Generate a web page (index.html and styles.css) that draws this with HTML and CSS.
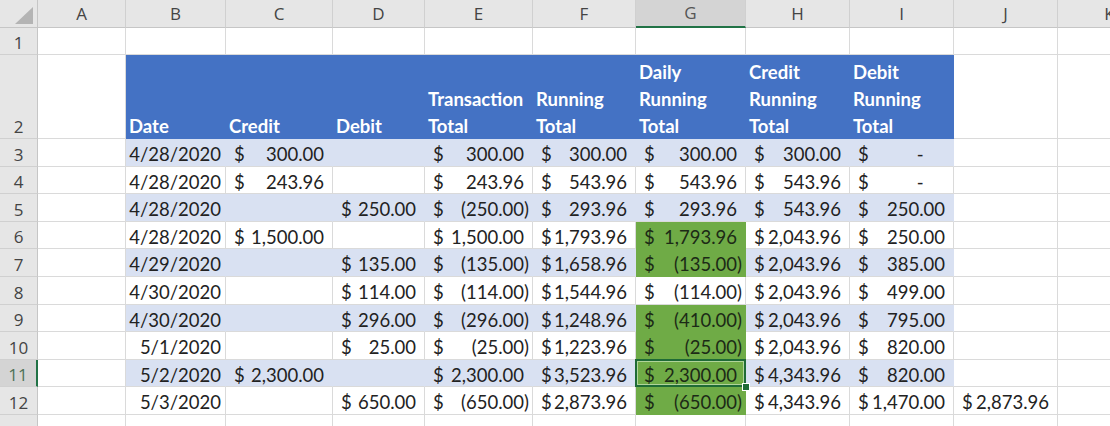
FILE: index.html
```html
<!DOCTYPE html>
<html>
<head>
    <title>Running Totals</title>
    <link rel="stylesheet" href="styles.css">
</head>
<body>
    <div class="sheet" id="sheet"></div>
    <script>
        // column letters and the selected cell
        const cols = ['A', 'B', 'C', 'D', 'E', 'F', 'G', 'H', 'I', 'J', 'K'];
        const selCol = 'G';
        const selRow = 11;

        // header text of row 2 (B..I)
        const heads = [
            ['Date'], ['Credit'], ['Debit'], ['Transaction', 'Total'], ['Running', 'Total'],
            ['Daily', 'Running', 'Total'], ['Credit', 'Running', 'Total'], ['Debit', 'Running', 'Total']
        ];

        // data rows 3..12: date, credit, debit, trans, running, daily, credit run, debit run
        const rows = [
            ['4/28/2020', '300.00', '', '300.00', '300.00', '300.00', '300.00', '0'],
            ['4/28/2020', '243.96', '', '243.96', '543.96', '543.96', '543.96', '0'],
            ['4/28/2020', '', '250.00', '-250.00', '293.96', '293.96', '543.96', '250.00'],
            ['4/28/2020', '1,500.00', '', '1,500.00', '1,793.96', '1,793.96', '2,043.96', '250.00'],
            ['4/29/2020', '', '135.00', '-135.00', '1,658.96', '-135.00', '2,043.96', '385.00'],
            ['4/30/2020', '', '114.00', '-114.00', '1,544.96', '-114.00', '2,043.96', '499.00'],
            ['4/30/2020', '', '296.00', '-296.00', '1,248.96', '-410.00', '2,043.96', '795.00'],
            ['5/1/2020', '', '25.00', '-25.00', '1,223.96', '-25.00', '2,043.96', '820.00'],
            ['5/2/2020', '2,300.00', '', '2,300.00', '3,523.96', '2,300.00', '4,343.96', '820.00'],
            ['5/3/2020', '', '650.00', '-650.00', '2,873.96', '-650.00', '4,343.96', '1,470.00']
        ];

        // rows where the daily running total is highlighted
        const greenRows = [6, 7, 9, 10, 11, 12];

        // accounting format: _($* #,##0.00_)
        function money(v) {
            if (v === '0') {
                return '<span class="pad">(</span>$<span class="fill"></span>-<span class="pad">00)</span>';
            }
            let txt = v.startsWith('-') ? '(' + v.slice(1) + ')' : v + '<span class="pad">)</span>';
            return '<span class="pad">(</span>$<span class="fill"></span>' + txt;
        }

        function makeCell(cls, html) {
            const d = document.createElement('div');
            d.className = cls;
            d.innerHTML = html || '';
            return d;
        }

        const sheet = document.getElementById('sheet');

        // column header row
        sheet.appendChild(makeCell('corner', '<span class="tri"></span>'));
        for (const c of cols) {
            sheet.appendChild(makeCell('colhead' + (c === selCol ? ' sel' : ''), c));
        }

        for (let r = 1; r <= 13; r++) {
            sheet.appendChild(makeCell('rowhead' + (r === selRow ? ' sel' : ''), r));
            cols.forEach((c, i) => {
                let cls = 'cell';
                let html = '';
                const inTable = i >= 1 && i <= 8;

                if (r === 2 && inTable) {
                    cls += ' head';
                    html = '<span>' + heads[i - 1].join('<br>') + '</span>';
                } else if (r >= 3 && r <= 12 && inTable) {
                    const v = rows[r - 3][i - 1];
                    if (r % 2 === 1) cls += ' band';
                    if (c === 'G' && greenRows.includes(r)) cls += ' green';
                    if (c === selCol && r === selRow) cls += ' active';
                    if (i === 1) {
                        cls += ' date';
                        html = v;
                    } else if (v !== '') {
                        cls += ' num';
                        html = money(v);
                    }
                } else if (r === 12 && c === 'J') {
                    cls += ' num';
                    html = money('2,873.96');
                }
                sheet.appendChild(makeCell(cls, html));
            });
        }
    </script>
</body>
</html>
```

FILE: styles.css
```css
body {
    margin: 0;
    overflow: hidden;
    background: #fff;
}
.sheet {
    display: grid;
    grid-template-columns: 38px 88px 100px 107px 92px 108px 103px 110px 104px 104px 104px 104px;
    grid-template-rows: 28px 27px 84px repeat(10, 27.6px) 40px;
    font-family: Lato, "Open Sans", sans-serif;
    font-size: 18.5px;
    color: #222;
}
.corner, .colhead, .rowhead {
    background: #e6e6e6;
    font-family: "Open Sans", sans-serif;
    font-size: 17px;
    color: #444;
    box-sizing: border-box;
}
.corner {
    position: relative;
    border-right: 1px solid #c6c6c6;
    border-bottom: 1px solid #c6c6c6;
}
.tri {
    position: absolute;
    right: 4px;
    bottom: 3px;
    width: 0;
    height: 0;
    border-left: 18px solid transparent;
    border-bottom: 17px solid #b4b4b4;
}
.colhead {
    display: flex;
    align-items: center;
    justify-content: center;
    border-right: 1px solid #d0d0d0;
    border-bottom: 1px solid #c6c6c6;
    padding-bottom: 1px;
}
.colhead.sel {
    background: #d4d4d4;
    color: #555;
    border-bottom: 2px solid #217346;
}
.rowhead {
    display: flex;
    align-items: flex-end;
    justify-content: center;
    line-height: 23px;
    border-right: 1px solid #c6c6c6;
    border-bottom: 1px solid #d0d0d0;
}
.rowhead.sel {
    background: #d4d4d4;
    color: #4f7157;
    border-right: 2px solid #217346;
}
.cell {
    box-sizing: border-box;
    border-right: 1px solid #dadada;
    border-bottom: 1px solid #dadada;
    line-height: 26.6px;
    padding-top: 2px;
    white-space: nowrap;
    overflow: hidden;
}
.cell.head {
    background: #4472c4;
    border-color: #4472c4;
    color: #fff;
    font-weight: bold;
    display: flex;
    align-items: flex-end;
    padding: 0 0 0 3px;
    line-height: 27px;
}
.cell.head span {
    margin-bottom: -2px;
}
.cell.band {
    background: #d9e1f2;
    border-right-color: #d9e1f2;
}
.cell.green {
    background: #6fab46;
    border-color: #6fab46;
    color: #1c2a16;
}
.cell.active {
    position: relative;
    overflow: visible;
    z-index: 2;
}
.cell.active::before {
    content: "";
    position: absolute;
    left: -1px;
    top: -1px;
    right: -1px;
    bottom: -1px;
    border: 2px solid #1f6b36;
    box-shadow: inset 0 0 0 1px rgba(220, 240, 210, 0.6);
}
.cell.active::after {
    content: "";
    position: absolute;
    right: -5px;
    bottom: -5px;
    width: 6px;
    height: 6px;
    background: #1f6b36;
    border: 1px solid #fff;
}
.date {
    text-align: right;
    padding-right: 4px;
}
.num {
    display: flex;
    padding-left: 3px;
    padding-right: 3px;
}
.fill {
    flex: 1;
}
.pad {
    visibility: hidden;
}
```
